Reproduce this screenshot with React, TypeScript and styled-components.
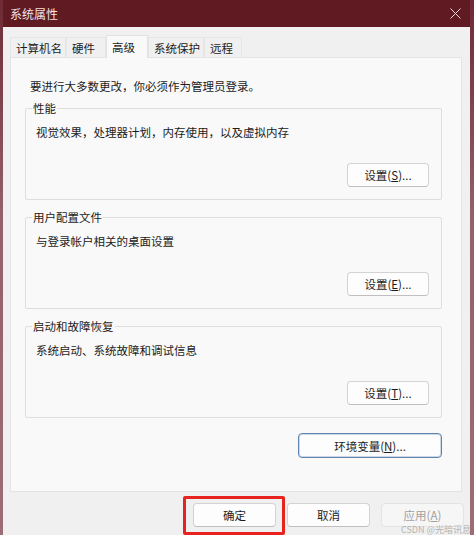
import styled, { createGlobalStyle } from 'styled-components';

const GlobalStyle = createGlobalStyle`
  html, body {
    margin: 0;
    padding: 0;
  }
  body {
    background: #8e5a65;
    font-family: "Noto Sans CJK SC", "Noto Sans", sans-serif;
    -webkit-font-smoothing: antialiased;
  }
`;

const tabs = [
  { label: '计算机名', width: 56 },
  { label: '硬件', width: 40 },
  { label: '高级', width: 42, active: true },
  { label: '系统保护', width: 56 },
  { label: '远程', width: 38 },
];

const groups = [
  { title: '性能', text: '视觉效果，处理器计划，内存使用，以及虚拟内存', key: 'S' },
  { title: '用户配置文件', text: '与登录帐户相关的桌面设置', key: 'E' },
  { title: '启动和故障恢复', text: '系统启动、系统故障和调试信息', key: 'T' },
];

export default function App() {
  return (
    <>
      <GlobalStyle />
      <Screen>
        <Window>
          <TitleBar>
            <Title>系统属性</Title>
            <CloseIcon width="11" height="11" viewBox="0 0 11 11">
              <path d="M0.5 0.5 L10.5 10.5 M10.5 0.5 L0.5 10.5" stroke="#ecd6da" strokeWidth="1" fill="none" />
            </CloseIcon>
          </TitleBar>
          <Body>
            <TabRow>
              {tabs.map((t) => (
                <Tab key={t.label} $w={t.width} $active={!!t.active}>
                  {t.label}
                </Tab>
              ))}
            </TabRow>
            <Panel>
              <Notice>要进行大多数更改，你必须作为管理员登录。</Notice>
              <Groups>
                {groups.map((g) => (
                  <GroupBox key={g.title}>
                    <Legend>{g.title}</Legend>
                    <GroupText>{g.text}</GroupText>
                    <SettingsButton>
                      设置(<u>{g.key}</u>)...
                    </SettingsButton>
                  </GroupBox>
                ))}
              </Groups>
              <EnvButton>
                环境变量(<u>N</u>)...
              </EnvButton>
            </Panel>
            <Footer>
              <DialogButton>确定</DialogButton>
              <DialogButton>取消</DialogButton>
              <DialogButton disabled>
                应用(<u>A</u>)
              </DialogButton>
            </Footer>
          </Body>
        </Window>
        <Highlight />
        <Watermark>CSDN @光暗讯息</Watermark>
      </Screen>
    </>
  );
}

const Screen = styled.div`
  position: relative;
  width: 474px;
  height: 535px;
  overflow: hidden;
  display: flex;
  padding-left: 3px;
  box-sizing: border-box;
  background: linear-gradient(180deg, #6e2a35 0%, #93606b 40%, #9c6d77 100%);
`;

const Window = styled.div`
  flex-shrink: 0;
  width: 467px;
  height: 560px;
  display: flex;
  flex-direction: column;
  background: #f0f0f0;
`;

const TitleBar = styled.div`
  height: 27px;
  flex-shrink: 0;
  display: flex;
  align-items: center;
  justify-content: space-between;
  padding: 0 9px 0 7px;
  background: #601a22;
`;

const Title = styled.span`
  font-size: 12px;
  color: #f3e1e4;
`;

const CloseIcon = styled.svg`
  display: block;
`;

const Body = styled.div`
  display: flex;
  flex-direction: column;
  padding: 8px 8px 0 7px;
  color: #1c1c1c;
  font-size: 11.5px;
  line-height: 16px;
`;

const TabRow = styled.div`
  display: flex;
  align-items: flex-end;
  height: 22px;
`;

const Tab = styled.div<{ $w: number; $active: boolean }>`
  box-sizing: border-box;
  width: ${(p) => p.$w}px;
  height: ${(p) => (p.$active ? 23 : 20)}px;
  padding-left: 5px;
  display: flex;
  align-items: center;
  background: ${(p) => (p.$active ? '#f9f9f9' : '#f0f0f0')};
  border: 1px solid ${(p) => (p.$active ? '#e2e2e2' : '#e6e6e6')};
  border-bottom: none;
  margin-bottom: ${(p) => (p.$active ? -1 : 0)}px;
  position: relative;
  z-index: ${(p) => (p.$active ? 1 : 0)};
  white-space: nowrap;
`;

const Panel = styled.div`
  box-sizing: border-box;
  height: 435px;
  display: flex;
  flex-direction: column;
  padding: 0 19px 0 14px;
  background: #f9f9f9;
  border: 1px solid #e4e4e4;
`;

const Notice = styled.div`
  margin: 20px 0 0 5px;
`;

const Groups = styled.div`
  display: flex;
  flex-direction: column;
  gap: 17px;
  margin-top: 14px;
`;

const GroupBox = styled.div`
  position: relative;
  box-sizing: border-box;
  height: 92px;
  display: flex;
  flex-direction: column;
  padding: 15px 12px 12px 10px;
  border: 1px solid #dedede;
  border-radius: 2px;
`;

const Legend = styled.span`
  position: absolute;
  top: -9px;
  left: 6px;
  padding: 0 1px;
  background: #f9f9f9;
`;

const GroupText = styled.div``;

const ButtonBase = styled.button`
  box-sizing: border-box;
  height: 24px;
  padding: 0;
  font-family: inherit;
  font-size: 11.5px;
  color: #1c1c1c;
  background: #fdfdfd;
  border: 1px solid #d3d3d3;
  border-bottom-color: #bfbfbf;
  border-radius: 4px;
  display: flex;
  align-items: center;
  justify-content: center;

  u {
    text-underline-offset: 1px;
  }
`;

const SettingsButton = styled(ButtonBase)`
  width: 82px;
  margin-top: auto;
  align-self: flex-end;
`;

const EnvButton = styled(ButtonBase)`
  width: 144px;
  height: 25px;
  margin-top: 15px;
  align-self: flex-end;
  border: 1px solid #5f84b2;
  box-shadow: inset 0 0 0 1px rgba(95, 132, 178, 0.3);
`;

const Footer = styled.div`
  display: flex;
  justify-content: flex-end;
  gap: 11px;
  padding-top: 11px;
  margin-right: -2px;
`;

const DialogButton = styled(ButtonBase)`
  width: 83px;

  &:disabled {
    color: #a2a2a2;
    background: #f6f6f6;
    border-color: #e3e3e3;
  }
`;

const Highlight = styled.div`
  position: absolute;
  left: 183px;
  top: 496px;
  width: 102px;
  height: 39px;
  box-sizing: border-box;
  border: 3px solid #e8221e;
  border-radius: 2px;
  pointer-events: none;
`;

const Watermark = styled.div`
  position: absolute;
  right: 3px;
  bottom: 0;
  font-size: 9px;
  line-height: 11px;
  color: rgba(150, 150, 150, 0.7);
  font-family: "Noto Sans CJK SC", "Noto Sans", sans-serif;
`;
